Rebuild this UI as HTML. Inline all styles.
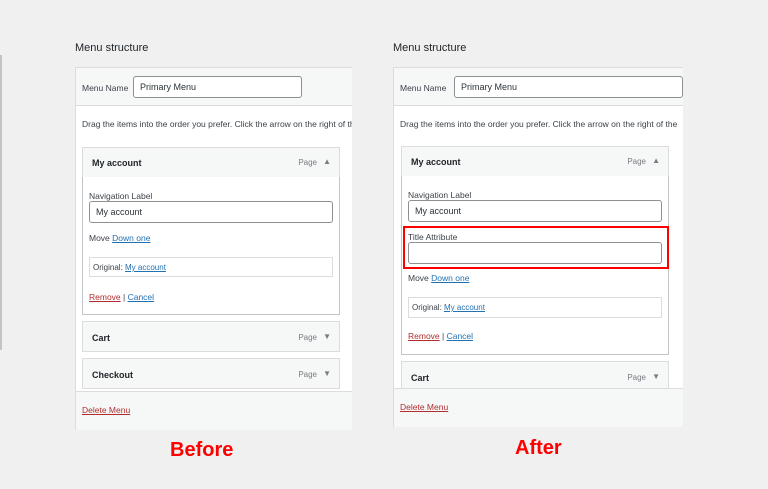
<!DOCTYPE html><html><head><style>
body{margin:0;width:768px;height:489px;background:#f0f0f1;font-family:"Liberation Sans",sans-serif;position:relative;overflow:hidden;color:#3c434a}
div,span{position:absolute;box-sizing:border-box}
.t{font-size:8.5px;white-space:nowrap}
.h{font-size:11px;color:#1d2327;font-weight:500}
.bar{background:#f6f7f7}
.inp{background:#fff;border:1px solid #8c8f94;border-radius:3px;font-size:9px;padding:5px 0 0 6px;color:#2c3338}
.item{border:1px solid #dcdcde;background:#f6f7f7;font-size:9px;font-weight:bold;color:#1d2327;padding-left:9px}
.pg{font-size:8px;color:#787c82;font-weight:normal}
a{color:#2271b1;text-decoration:underline}
.red{color:#b32d2e}
.big{font-size:20px;font-weight:bold;color:#f00}
</style></head><body>
<div style="left:0;top:55px;width:2px;height:295px;background:#c3c4c7"></div>

<!-- LEFT -->
<div class="h" style="left:75px;top:42px">Menu structure</div>
<div style="left:75px;top:67px;width:277px;height:363px;background:#fff;border-left:1px solid #dcdcde;border-top:1px solid #dcdcde"></div>
<div class="bar" style="left:76px;top:68px;width:276px;height:38px;border-bottom:1px solid #dcdcde"></div>
<div class="t" style="left:82px;top:83px">Menu Name</div>
<div class="inp" style="left:133px;top:76px;width:169px;height:22px">Primary Menu</div>
<div class="t" style="left:82px;top:119px;width:270px;overflow:hidden">Drag the items into the order you prefer. Click the arrow on the right of the</div>
<div class="item" style="left:82px;top:147px;width:258px;height:31px;padding-top:10px">My account<span class="pg" style="right:22px;top:10px">Page</span><span class="pg" style="right:8px;top:9px">▲</span></div>
<div style="left:82px;top:177px;width:258px;height:138px;border:1px solid #c3c4c7;border-top:none;background:#fff"></div>
<div class="t" style="left:89px;top:191px">Navigation Label</div>
<div class="inp" style="left:89px;top:201px;width:244px;height:22px">My account</div>
<div class="t" style="left:89px;top:233px">Move <a>Down one</a></div>
<div class="t" style="left:89px;top:257px;width:244px;height:20px;border:1px solid #dcdcde;padding:5px 0 0 3px;font-size:8px">Original: <a>My account</a></div>
<div class="t" style="left:89px;top:292px"><a class="red">Remove</a> | <a>Cancel</a></div>
<div class="item" style="left:82px;top:321px;width:258px;height:31px;padding-top:11px">Cart<span class="pg" style="right:22px;top:11px">Page</span><span class="pg" style="right:8px;top:10px">▼</span></div>
<div class="item" style="left:82px;top:358px;width:258px;height:31px;padding-top:11px">Checkout<span class="pg" style="right:22px;top:11px">Page</span><span class="pg" style="right:8px;top:10px">▼</span></div>
<div class="bar" style="left:76px;top:391px;width:276px;height:39px;border-top:1px solid #dcdcde"></div>
<div class="t" style="left:82px;top:405px"><a class="red">Delete Menu</a></div>
<div class="big" style="left:170px;top:439px">Before</div>

<!-- RIGHT -->
<div class="h" style="left:393px;top:42px">Menu structure</div>
<div style="left:393px;top:67px;width:290px;height:360px;background:#fff;border-left:1px solid #dcdcde;border-top:1px solid #dcdcde"></div>
<div class="bar" style="left:394px;top:68px;width:289px;height:38px;border-bottom:1px solid #dcdcde"></div>
<div class="t" style="left:400px;top:83px">Menu Name</div>
<div class="inp" style="left:454px;top:76px;width:229px;height:22px">Primary Menu</div>
<div class="t" style="left:400px;top:119px;width:283px;overflow:hidden">Drag the items into the order you prefer. Click the arrow on the right of the</div>
<div class="item" style="left:401px;top:146px;width:268px;height:31px;padding-top:10px">My account<span class="pg" style="right:22px;top:10px">Page</span><span class="pg" style="right:8px;top:9px">▲</span></div>
<div style="left:401px;top:176px;width:268px;height:179px;border:1px solid #c3c4c7;border-top:none;background:#fff"></div>
<div class="t" style="left:408px;top:190px">Navigation Label</div>
<div class="inp" style="left:408px;top:200px;width:254px;height:22px">My account</div>
<div style="left:403px;top:226px;width:266px;height:43px;border:2px solid #f00"></div>
<div class="t" style="left:408px;top:232px">Title Attribute</div>
<div class="inp" style="left:408px;top:242px;width:254px;height:22px"></div>
<div class="t" style="left:408px;top:273px">Move <a>Down one</a></div>
<div class="t" style="left:408px;top:297px;width:254px;height:21px;border:1px solid #dcdcde;padding:5px 0 0 3px;font-size:8px">Original: <a>My account</a></div>
<div class="t" style="left:408px;top:331px"><a class="red">Remove</a> | <a>Cancel</a></div>
<div class="item" style="left:401px;top:361px;width:268px;height:28px;padding-top:11px">Cart<span class="pg" style="right:22px;top:11px">Page</span><span class="pg" style="right:8px;top:10px">▼</span></div>
<div class="bar" style="left:394px;top:388px;width:289px;height:39px;border-top:1px solid #dcdcde"></div>
<div class="t" style="left:400px;top:402px"><a class="red">Delete Menu</a></div>
<div class="big" style="left:515px;top:437px">After</div>
</body></html>
